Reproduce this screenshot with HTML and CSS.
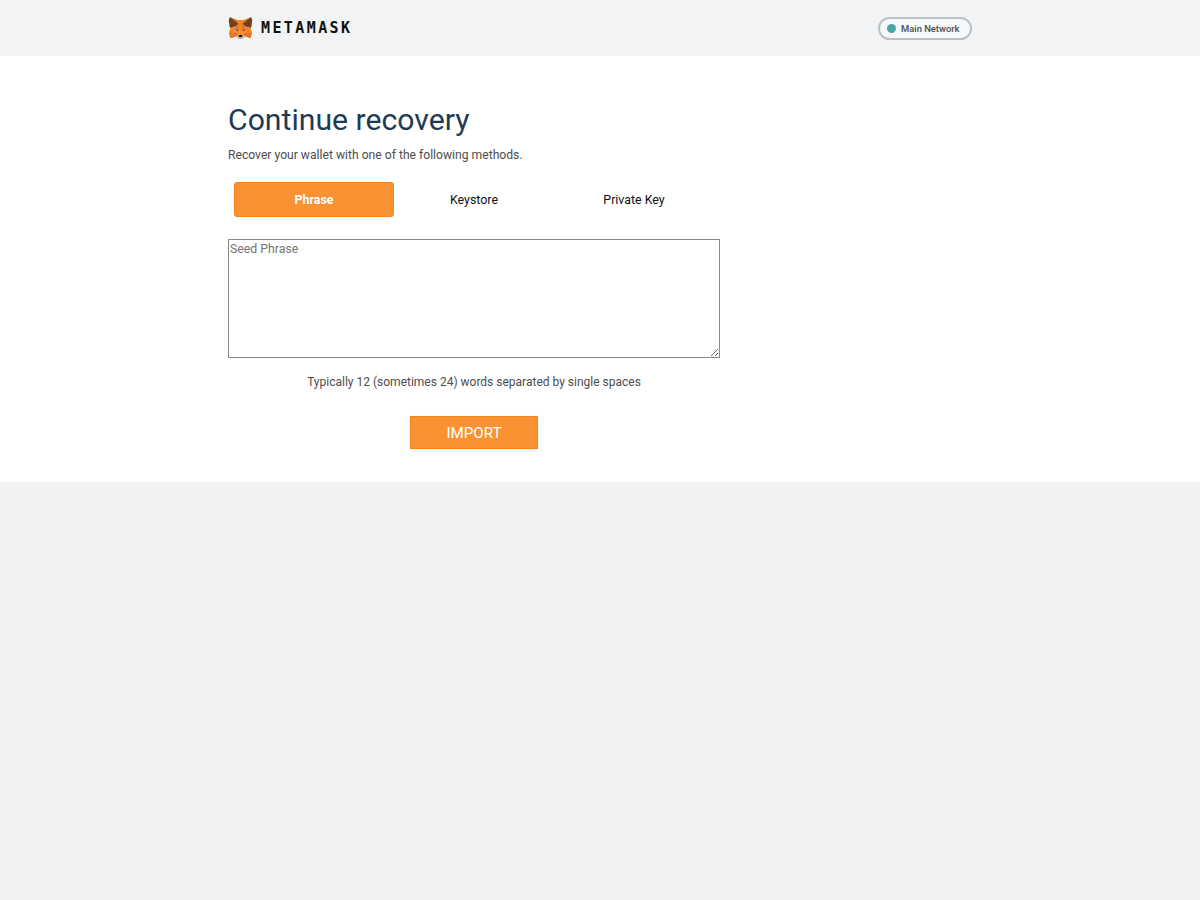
FILE: index.html
```html
<!DOCTYPE html>
<html>
<head>
  <title>MetaMask</title>
  <link rel="stylesheet" href="styles.css">
</head>
<body>
  <header class="topbar">
    <div class="wrap topbar-inner">
      <div class="brand">
        <svg class="fox" width="25" height="24" viewBox="0 0 35.600 33">
          <path fill="#e17726" d="M32.960 1L19.820 10.720L22.270 4.990Z"/>
          <path fill="#e27625" d="M2.660 1L15.680 10.810L13.350 4.990ZM28.230 23.530L24.730 28.890L32.220 30.950L34.360 23.650ZM1.270 23.650L3.400 30.950L10.890 28.890L7.390 23.530ZM10.470 14.510L8.400 17.650L15.800 17.980L15.540 10.020ZM25.150 14.510L19.990 9.930L19.820 17.980L27.230 17.650ZM10.890 28.890L15.360 26.710L11.500 23.710ZM20.260 26.710L24.730 28.890L24.120 23.710Z"/>
          <path fill="#d7c1b3" d="M24.730 28.890L20.260 26.710L20.630 29.630L20.590 30.870ZM10.890 28.890L15.030 30.870L15 29.630L15.360 26.710Z"/>
          <path fill="#233447" d="M15.100 21.800L11.400 20.700L14 19.500ZM20.500 21.800L21.600 19.500L24.200 20.700Z"/>
          <path fill="#cc6228" d="M10.890 28.890L11.520 23.530L7.390 23.650ZM24.100 23.530L24.730 28.890L28.230 23.650ZM27.230 17.650L19.820 17.980L20.500 21.800L21.600 19.500L24.200 20.700ZM11.400 20.700L14 19.500L15.100 21.800L15.800 17.980L8.400 17.650Z"/>
          <path fill="#e27525" d="M8.400 17.650L11.500 23.710L11.400 20.700ZM24.200 20.700L24.120 23.710L27.230 17.650ZM15.800 17.980L15.100 21.800L15.970 26.300L16.200 20.400ZM19.820 17.980L19.500 20.400L19.650 26.300L20.500 21.800Z"/>
          <path fill="#f5841f" d="M20.500 21.800L19.650 26.300L20.260 26.710L24.120 23.710L24.200 20.700ZM11.400 20.700L11.500 23.710L15.360 26.710L15.970 26.300L15.100 21.800Z"/>
          <path fill="#c0ac9d" d="M20.590 30.870L20.630 29.630L20.300 29.340H15.320L15 29.630L15.030 30.870L10.890 28.890L12.340 30.070L15.280 32.100H20.330L23.280 30.070L24.730 28.890Z"/>
          <path fill="#161616" d="M20.260 26.710L19.650 26.300H15.970L15.360 26.710L15 29.630L15.320 29.340H20.300L20.630 29.630Z"/>
          <path fill="#763e1a" d="M33.520 11.350L34.630 5.980L32.960 1L20.260 10.420L25.150 14.510L32.060 16.530L33.580 14.760L32.920 14.280L33.970 13.320L33.170 12.690L34.220 11.890ZM1 5.980L2.120 11.350L1.400 11.890L2.460 12.690L1.660 13.320L2.710 14.280L2.050 14.760L3.570 16.530L10.470 14.510L15.360 10.420L2.660 1Z"/>
          <path fill="#f5841f" d="M32.060 16.530L25.150 14.510L27.230 17.650L24.120 23.710L28.230 23.650H34.360ZM10.470 14.510L3.570 16.530L1.270 23.650H7.390L11.500 23.710L8.400 17.650ZM19.820 17.980L20.260 10.420L22.270 4.990H13.350L15.360 10.420L15.800 17.980L15.960 20.420V26.300H19.650L19.670 20.420Z"/>
        </svg>
        <span class="wordmark">METAMASK</span>
      </div>
      <div class="network">
        <span class="network-dot"></span>
        <span class="network-name">Main Network</span>
      </div>
    </div>
  </header>

  <main class="panel">
    <div class="wrap">
      <div class="recovery">
        <h1>Continue recovery</h1>
        <p class="lead">Recover your wallet with one of the following methods.</p>
        <div class="tabs">
          <button class="tab tab-active">Phrase</button>
          <button class="tab">Keystore</button>
          <button class="tab">Private Key</button>
        </div>
        <textarea class="seed" placeholder="Seed Phrase"></textarea>
        <p class="hint">Typically 12 (sometimes 24) words separated by single spaces</p>
        <button class="import">IMPORT</button>
      </div>
    </div>
  </main>
</body>
</html>
```

FILE: styles.css
```css
html, body {
  margin: 0;
  padding: 0;
}

body {
  background: #f2f2f3;
  font-family: Roboto, "Liberation Sans", sans-serif;
  color: #4d4d4d;
}

.wrap {
  width: 744px;
  margin: 0 auto;
}

.topbar {
  height: 56px;
  background: #f2f3f4;
}

.topbar-inner {
  display: flex;
  justify-content: space-between;
  align-items: center;
  height: 56px;
}

.brand {
  display: flex;
  align-items: center;
}

.fox {
  display: block;
  margin-right: 8px;
}

.wordmark {
  font-family: "DejaVu Sans Mono", "Liberation Mono", monospace;
  font-size: 15px;
  font-weight: 700;
  letter-spacing: 2.400px;
  color: #111;
}

.network {
  display: flex;
  align-items: center;
  box-sizing: border-box;
  width: 94px;
  height: 23px;
  padding-left: 7px;
  background: #f7f8f9;
  border: 2px solid #bbc0c5;
  border-radius: 12px;
}

.network-dot {
  width: 9px;
  height: 9px;
  border-radius: 50%;
  background: #4ba5a5;
  margin-right: 5px;
}

.network-name {
  font-size: 9.400px;
  font-weight: 500;
  color: #4d4d4d;
}

.panel {
  height: 425.500px;
  background: #fff;
}

.recovery {
  width: 492px;
  padding-top: 44px;
}

h1 {
  margin: 0;
  font-size: 30.200px;
  font-weight: 400;
  line-height: 40px;
  color: #1f3a56;
}

.lead {
  margin: 6px 0 0;
  font-size: 12.150px;
  line-height: 18px;
}

.tabs {
  display: flex;
  justify-content: space-between;
  padding: 0 6px;
  margin-top: 18px;
}

.tab {
  width: 160px;
  height: 35px;
  padding: 0;
  background: none;
  border: none;
  border-radius: 3px;
  font-family: inherit;
  font-size: 12.400px;
  color: #111;
}

.tab-active {
  background: #f99233;
  border: 1px solid #f6851b;
  font-weight: 700;
  color: #fff;
}

.seed {
  display: block;
  box-sizing: border-box;
  width: 492px;
  height: 119px;
  margin-top: 22px;
  padding: 1px;
  border: 1px solid #8a8a8a;
  font-family: inherit;
  font-size: 12.300px;
  line-height: 16px;
}

.hint {
  margin: 16px 0 0;
  font-size: 12px;
  line-height: 16px;
  text-align: center;
}

.import {
  display: block;
  width: 128px;
  height: 33px;
  margin: 26px auto 0;
  padding: 0;
  background: #f99233;
  border: 1px solid #f6851b;
  box-shadow: 0 2px 4px rgba(0, 0, 0, 0.08);
  font-family: inherit;
  font-size: 15.200px;
  color: #fff;
}
```
